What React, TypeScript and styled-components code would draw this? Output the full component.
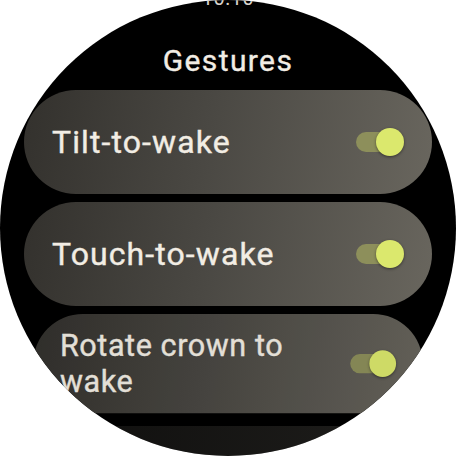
import styled, { createGlobalStyle } from 'styled-components';

const colors = {
  page: '#ffffff',
  screen: '#000000',
  text: '#f2ede4',
  chipDark: '#33312d',
  chipMid: '#4a4843',
  chipLight: '#69665e',
  track: '#8d8f5b',
  thumb: '#dbe86d',
};

const GlobalStyle = createGlobalStyle`
  html, body {
    margin: 0;
    padding: 0;
    background: ${colors.page};
  }
  * {
    box-sizing: border-box;
  }
`;

// Round watch face
const Watch = styled.div`
  width: 456px;
  height: 456px;
  border-radius: 50%;
  overflow: hidden;
  background: ${colors.screen};
  font-family: Roboto, 'Noto Sans', sans-serif;
  color: ${colors.text};
  display: flex;
  flex-direction: column;
  align-items: center;
`;

const TimeText = styled.div`
  font-size: 20px;
  line-height: 20px;
  height: 20px;
  margin-top: -12px;
  letter-spacing: 0.5px;
  color: #d8d4cc;
`;

const Title = styled.h1`
  margin: 35px 0 0;
  font-size: 30px;
  font-weight: 400;
  line-height: 36px;
  letter-spacing: 1.4px;
  -webkit-text-stroke: 0.35px currentColor;
`;

const List = styled.div`
  width: 100%;
  padding: 0 24px;
  margin-top: 11px;
  display: flex;
  flex-direction: column;
  gap: 8px;
`;

const Chip = styled.div<{ $scale?: number; $fade?: number }>`
  flex: none;
  height: 104px;
  border-radius: 52px;
  padding: 0 28px;
  display: flex;
  align-items: center;
  gap: 20px;
  background: linear-gradient(100deg, ${colors.chipDark} 0%, ${colors.chipMid} 45%, ${colors.chipLight} 100%);
  transform: scale(${(p) => p.$scale ?? 1});
  transform-origin: top center;
  opacity: ${(p) => p.$fade ?? 1};
`;

const Label = styled.span<{ $tight?: boolean }>`
  flex: 1;
  font-size: 32px;
  font-weight: 400;
  line-height: 38px;
  letter-spacing: ${(p) => (p.$tight ? '0.6px' : '1.1px')};
  -webkit-text-stroke: 0.4px currentColor;
`;

const Switch = styled.div`
  position: relative;
  flex: none;
  width: 48px;
  height: 28px;
`;

const Track = styled.div`
  position: absolute;
  left: 0;
  top: 4px;
  width: 44px;
  height: 20px;
  border-radius: 10px;
  background: ${colors.track};
`;

const Thumb = styled.div`
  position: absolute;
  right: 0;
  top: 0;
  width: 28px;
  height: 28px;
  border-radius: 50%;
  background: ${colors.thumb};
  box-shadow: 0 1px 3px rgba(0, 0, 0, 0.45);
`;

const settings = [
  { label: 'Tilt-to-wake', scale: 1, fade: 1, tight: false },
  { label: 'Touch-to-wake', scale: 1, fade: 1, tight: false },
  { label: 'Rotate crown to wake', scale: 0.955, fade: 0.94, tight: true },
];

export default function App() {
  return (
    <>
      <GlobalStyle />
      <Watch>
        <TimeText>10:10</TimeText>
        <Title>Gestures</Title>
        <List>
          {settings.map((s) => (
            <Chip key={s.label} $scale={s.scale} $fade={s.fade}>
              <Label $tight={s.tight}>{s.label}</Label>
              <Switch>
                <Track />
                <Thumb />
              </Switch>
            </Chip>
          ))}
          <Chip $scale={0.9} $fade={0.3} />
        </List>
      </Watch>
    </>
  );
}
